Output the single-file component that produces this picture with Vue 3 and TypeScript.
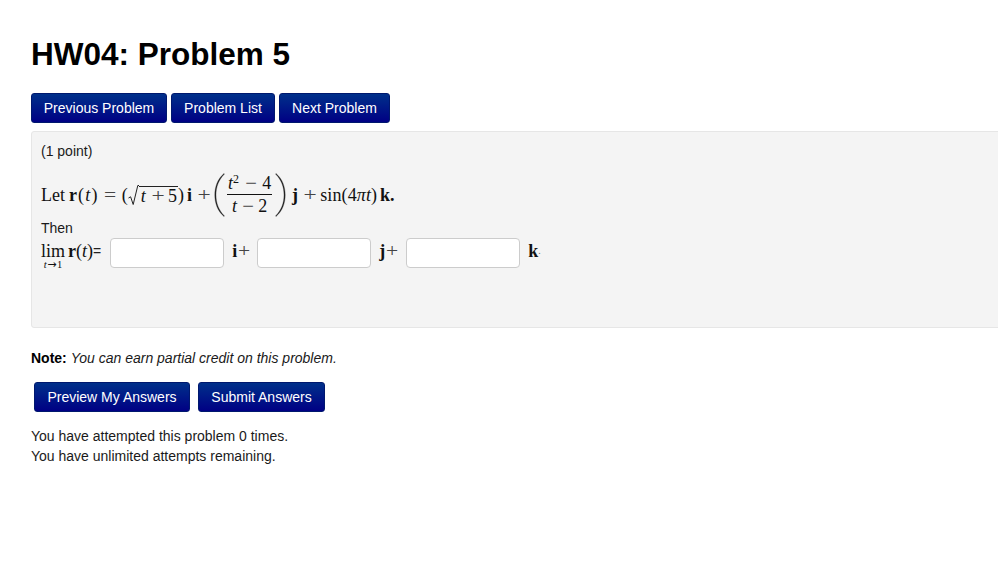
<script setup lang="ts">
interface Btn { label: string; kind: string }
const navButtons: Btn[] = [
  { label: 'Previous Problem', kind: 'w136' },
  { label: 'Problem List', kind: 'w104' },
  { label: 'Next Problem', kind: 'w111' },
]
</script>

<template>
  <main class="page">
    <h1 class="title">HW04: Problem 5</h1>
    <nav class="nav-row">
      <a v-for="b in navButtons" :key="b.label" class="btn" :class="b.kind">{{ b.label }}</a>
    </nav>
    <section class="problem">
      <p class="point">(1 point)</p>
      <div class="formula math">
        <span>Let</span><b class="r">r</b><span class="paren">(<i>t</i>)</span><span class="rel">=</span>
        <span>(</span>
        <span class="sqrt">
          <svg class="radical" width="11" height="22" viewBox="0 0 11 22"><path d="M0.5 13 L2.6 11.8 L5.2 19.5 L9.8 0.5 L11 0.5" fill="none" stroke="#222" stroke-width="1" /></svg>
          <span class="radicand"><i>t</i><span class="op o1">+</span>5</span>
        </span>
        <span>)</span>
        <b class="unit">i</b><span class="op o2">+</span>
        <svg class="delim" width="12" height="44" viewBox="0 0 12 44"><path d="M10.5 1 C4.5 7 2 14 2 22 C2 30 4.5 37 10.5 43 L10 43.5 C3.5 38 0.8 30 0.8 22 C0.8 14 3.5 6 10 0.5 Z" fill="#222" stroke="#222" stroke-width="0.3" /></svg>
        <span class="frac">
          <span class="num"><i>t</i><sup>2</sup><span class="op o3">−</span>4</span>
          <span class="den"><i>t</i><span class="op o4">−</span>2</span>
        </span>
        <svg class="delim rd" width="12" height="44" viewBox="0 0 12 44"><path d="M1.5 1 C7.5 7 10 14 10 22 C10 30 7.5 37 1.5 43 L2 43.5 C8.5 38 11.2 30 11.2 22 C11.2 14 8.5 6 2 0.5 Z" fill="#222" stroke="#222" stroke-width="0.3" /></svg>
        <b class="unit j">j</b><span class="op o5">+</span>
        <span class="sin">sin(4<i>πt</i>)</span>
        <b class="unit k">k</b><b>.</b>
      </div>
      <p class="then">Then</p>
      <div class="answer-row">
        <span class="lim math">
          <span class="lim-word">lim</span>
          <span class="lim-sub"><i>t</i><span class="arrow">→</span>1</span>
        </span>
        <span class="math rt"><b>r</b>(<i>t</i>)</span>
        <span class="eq">=</span>
        <input class="field first" type="text" aria-label="i component" />
        <span class="math vec"><b>i</b><span class="plus">+</span></span>
        <input class="field" type="text" aria-label="j component" />
        <span class="math vec wide"><b>j</b><span class="plus">+</span></span>
        <input class="field" type="text" aria-label="k component" />
        <span class="math vec end"><b>k</b><span class="dot">.</span></span>
      </div>
    </section>
    <p class="note"><b>Note:</b> <i>You can earn partial credit on this problem.</i></p>
    <div class="submit-row">
      <a class="btn w156">Preview My Answers</a>
      <a class="btn w127">Submit Answers</a>
    </div>
    <p class="attempts">You have attempted this problem 0 times.<br />You have unlimited attempts remaining.</p>
  </main>
</template>

<style scoped>
.page {
  padding: 0 0 0 31px;
  font-family: "Liberation Sans", Arial, sans-serif;
  font-size: 14px;
  line-height: 20px;
  color: #1a1a1a;
  width: 967px;
  overflow: hidden;
}
.title {
  margin: 0;
  padding-top: 34px;
  font-size: 31.5px;
  line-height: 40px;
  font-weight: 700;
  color: #000;
}
.nav-row {
  display: flex;
  gap: 4px;
  margin-top: 19px;
}
.btn {
  display: block;
  box-sizing: border-box;
  height: 30px;
  padding: 4px 0;
  border: 1px solid #00186e;
  border-radius: 3px;
  background: linear-gradient(#00308a, #000084);
  color: #fff;
  font-size: 14px;
  line-height: 20px;
  text-align: center;
}
.w136 { width: 136px; }
.w104 { width: 104px; }
.w111 { width: 111px; }
.w156 { width: 156px; }
.w127 { width: 127px; }
.problem {
  box-sizing: border-box;
  width: 1000px;
  height: 197px;
  margin-top: 8px;
  padding: 9px 9px;
  background: #f4f4f4;
  border: 1px solid #e6e6e6;
  border-radius: 3px 0 0 3px;
}
.point, .then { margin: 0; }
.math {
  font-family: "Liberation Serif", "Times New Roman", serif;
  color: #111;
}
.formula {
  display: flex;
  align-items: center;
  height: 44px;
  margin-top: 12px;
  font-size: 18px;
  white-space: pre;
}
.r { margin-left: 4px; }
.paren { letter-spacing: 1.2px; margin-left: 1px; }
.rel { margin: 0 7px 0 6px; color: #444; transform: scaleX(1.2); }
.op { display: inline-block; color: #444; transform: scaleX(1.3); }
.o1 { margin: 0 5px 0 7px; }
.o2 { margin: 0 5px 0 7px; }
.o3 { margin: 0 6.5px; transform: scaleX(1.15); }
.o4 { margin: 0 5.5px; transform: scaleX(1.15); }
.o5 { margin: 0 5px 0 7px; }
.sqrt { display: inline-flex; align-items: flex-end; }
.radical { margin-bottom: -1px; margin-top: 1px; flex: none; }
.radicand { border-top: 1px solid #222; line-height: 19px; padding: 0 1px 0 2px; }
.unit { margin-left: 3px; }
.delim { flex: none; }
.frac {
  display: inline-flex;
  flex-direction: column;
  align-items: center;
  flex: none;
  width: 45px;
  margin-left: 1px;
}
.num {
  display: block;
  box-sizing: border-box;
  width: 100%;
  text-align: center;
  line-height: 20px;
  border-bottom: 1px solid #111;
  white-space: pre;
  height: 22px;
}
.num sup { font-size: 12px; line-height: 0; vertical-align: 6px; }
.den { display: block; line-height: 22px; }
.rd { margin-left: 1.5px; }
.j { margin-left: 6.5px; }
.sin { letter-spacing: 0.1px; }
.k { margin-left: 3px; }
.then { margin-top: 1px; height: 20px; line-height: 20px; }
.answer-row {
  display: flex;
  align-items: flex-start;
  height: 30px;
}
.lim {
  display: inline-flex;
  flex-direction: column;
  align-items: center;
  flex: none;
  width: 24px;
  font-size: 18px;
}
.lim-word { line-height: 20px; height: 19px; margin-top: 3px; }
.lim-sub { font-size: 10.5px; line-height: 10px; white-space: nowrap; }
.arrow { font-family: "DejaVu Sans", sans-serif; font-size: 11px; margin: 0 0.5px; }
.rt { font-size: 18px; line-height: 26px; margin-left: 3px; white-space: pre; }
.eq { line-height: 26px; color: #222; }
.field {
  box-sizing: border-box;
  flex: none;
  width: 114px;
  height: 30px;
  margin: 0;
  padding: 0;
  background: #fff;
  border: 1px solid #ccc;
  border-radius: 4px;
}
.first { margin-left: 9px; }
.vec {
  display: flex;
  flex: none;
  width: 33px;
  padding-left: 8px;
  box-sizing: border-box;
  font-size: 18px;
  line-height: 26px;
}
.wide { width: 35px; padding-left: 8px; }
.plus { color: #444; margin-left: 2px; display: inline-block; transform: scaleX(1.2); }
.end { width: auto; }
.dot { color: #777; font-size: 10px; }
.note { margin: 20px 0 0; color: #000; }
.note i { color: #1a1a1a; }
.submit-row {
  display: flex;
  gap: 8px;
  margin: 14px 0 0 3px;
}
.attempts { margin: 14px 0 0; }
</style>

<style>
html, body { margin: 0; background: #fff; overflow: hidden; }
</style>
